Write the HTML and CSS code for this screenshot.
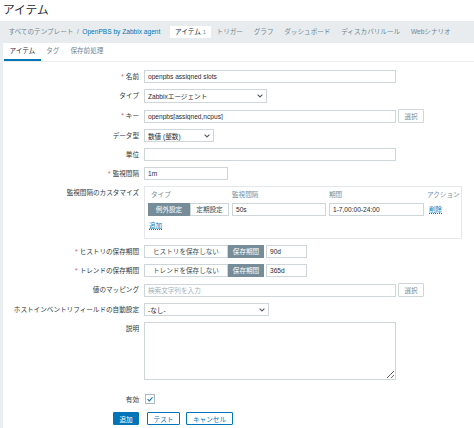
FILE: index.html
```html
<!DOCTYPE html>
<html lang="ja">
<head>
<meta charset="utf-8">
<title>アイテム</title>
<link rel="stylesheet" href="styles.css">
</head>
<body>
<header class="page-title">
  <h1>アイテム</h1>
</header>

<nav class="object-nav">
  <ul>
    <li class="crumbs"><a class="nav-link">すべてのテンプレート</a><span class="sep">/</span><a class="host-link">OpenPBS by Zabbix agent</a></li>
    <li class="selected">アイテム <span class="count">1</span></li>
    <li><a class="nav-link">トリガー</a></li>
    <li><a class="nav-link">グラフ</a></li>
    <li><a class="nav-link">ダッシュボード</a></li>
    <li><a class="nav-link">ディスカバリルール</a></li>
    <li><a class="nav-link">Webシナリオ</a></li>
  </ul>
</nav>

<main class="content">
  <div class="panel">
    <ul class="tabs">
      <li class="active">アイテム</li>
      <li>タグ</li>
      <li>保存前処理</li>
    </ul>

    <form class="form">
      <div class="row">
        <label class="label req">名前</label>
        <input class="input w-wide" value="openpbs assigned slots">
      </div>

      <div class="row">
        <label class="label">タイプ</label>
        <div class="select w-type"><span>Zabbixエージェント</span><svg class="chev" viewBox="0 0 6 4"><polyline points="0.6,0.6 3,3 5.4,0.6"/></svg></div>
      </div>

      <div class="row">
        <label class="label req">キー</label>
        <div class="field-group">
          <input class="input w-wide" value="openpbs[assigned,ncpus]">
          <button type="button" class="btn-alt">選択</button>
        </div>
      </div>

      <div class="row">
        <label class="label">データ型</label>
        <div class="select w-dtype"><span>数値 (整数)</span><svg class="chev" viewBox="0 0 6 4"><polyline points="0.6,0.6 3,3 5.4,0.6"/></svg></div>
      </div>

      <div class="row">
        <label class="label">単位</label>
        <input class="input w-wide" value="">
      </div>

      <div class="row">
        <label class="label req">監視間隔</label>
        <input class="input w-interval" value="1m">
      </div>

      <div class="row">
        <label class="label">監視間隔のカスタマイズ</label>
        <div class="interval-box">
          <div class="iv-grid iv-head">
            <span class="iv-type-head">タイプ</span>
            <span>監視間隔</span>
            <span>期間</span>
            <span>アクション</span>
          </div>
          <div class="iv-grid">
            <div class="toggle">
              <span class="on t-flex">例外設定</span><span class="t-sched">定期設定</span>
            </div>
            <input class="input" value="50s">
            <input class="input" value="1-7,00:00-24:00">
            <span><a class="link-action">削除</a></span>
          </div>
          <div class="iv-add"><a class="link-action">追加</a></div>
        </div>
      </div>

      <div class="row">
        <label class="label req">ヒストリの保存期間</label>
        <div class="field-group">
          <div class="toggle">
            <span class="t-off">ヒストリを保存しない</span><span class="on t-keep">保存期間</span>
          </div>
          <input class="input w-period" value="90d">
        </div>
      </div>

      <div class="row">
        <label class="label req">トレンドの保存期間</label>
        <div class="field-group">
          <div class="toggle">
            <span class="t-off">トレンドを保存しない</span><span class="on t-keep">保存期間</span>
          </div>
          <input class="input w-period" value="365d">
        </div>
      </div>

      <div class="row">
        <label class="label">値のマッピング</label>
        <div class="field-group">
          <input class="input w-wide" placeholder="検索文字列を入力">
          <button type="button" class="btn-alt">選択</button>
        </div>
      </div>

      <div class="row">
        <label class="label">ホストインベントリフィールドの自動設定</label>
        <div class="select w-inv"><span>-なし-</span><svg class="chev" viewBox="0 0 6 4"><polyline points="0.6,0.6 3,3 5.4,0.6"/></svg></div>
      </div>

      <div class="row row-desc">
        <label class="label">説明</label>
        <textarea class="textarea"></textarea>
      </div>

      <div class="row">
        <label class="label">有効</label>
        <span class="checkbox"><svg viewBox="0 0 10 10"><polyline points="2,5.2 4.2,7.4 8.2,2.8"/></svg></span>
      </div>

      <div class="row row-buttons">
        <div class="primary-cell"><button type="button" class="btn-primary">追加</button></div>
        <div class="secondary-cell">
          <button type="button" class="btn-outline b-test">テスト</button>
          <button type="button" class="btn-outline b-cancel">キャンセル</button>
        </div>
      </div>
    </form>
  </div>
</main>
</body>
</html>
```

FILE: styles.css
```css
* {
  box-sizing: border-box;
}

html,
body {
  margin: 0;
  padding: 0;
}

body {
  width: 474px;
  height: 428px;
  overflow: hidden;
  background: #ffffff;
  font-family: "Liberation Sans", "Noto Sans CJK JP", sans-serif;
  font-size: 6.6px;
  color: #1f2c33;
}

/* Page title */
.page-title {
  height: 21px;
  padding-left: 3px;
}

.page-title h1 {
  margin: 0;
  font-size: 11.7px;
  font-weight: normal;
  line-height: 19px;
  color: #1f2c33;
}

/* Template navigation strip */
.object-nav {
  height: 22px;
  background: #e8ecee;
}

.object-nav ul {
  display: flex;
  align-items: center;
  height: 100%;
  margin: 0;
  padding: 0 0 0 3px;
  list-style: none;
}

.object-nav li {
  padding: 0 5.4px;
  line-height: 12px;
  white-space: nowrap;
}

.object-nav li.crumbs {
  margin-right: 4px;
}

.object-nav li.selected {
  background: #ffffff;
  color: #1f2c33;
}

.nav-link {
  color: #6f8795;
}

.host-link {
  color: #0275b8;
}

.sep {
  margin: 0 3.5px;
  color: #768d99;
}

.count {
  font-size: 5.6px;
  color: #768d99;
}

/* Content */
.content {
  padding-left: 3px;
  background: #ebeef0;
}

.panel {
  height: 385px;
  background: #ffffff;
}

.tabs {
  display: flex;
  height: 19px;
  margin: 0;
  padding: 0 0 0 1px;
  list-style: none;
  border-bottom: 1px solid #ebeef0;
}

.tabs li {
  padding: 0 5.5px;
  line-height: 16px;
  color: #6f8795;
}

.tabs li.active {
  color: #1f2c33;
  border-bottom: 2px solid #0275b8;
}

/* Form grid */
.form {
  padding-top: 8px;
}

.row {
  display: grid;
  grid-template-columns: 136px auto;
  column-gap: 5px;
  align-items: start;
  margin-bottom: 6px;
}

.label {
  text-align: right;
  line-height: 13px;
  white-space: nowrap;
  color: #2a3a42;
}

.req::before {
  content: "*";
  margin-right: 2px;
  color: #e45959;
}

.input {
  display: block;
  height: 13px;
  margin: 0;
  padding: 0 3px;
  border: 1px solid #cfd6da;
  background: #ffffff;
  font: inherit;
  color: #1f2c33;
  outline: none;
}

.input::placeholder {
  color: #a3b1b8;
}

.w-wide {
  width: 252px;
}

.w-interval {
  width: 84px;
}

.w-period {
  width: 41px;
}

.select {
  display: flex;
  align-items: center;
  justify-content: space-between;
  height: 14px;
  padding: 0 3px;
  border: 1px solid #cfd6da;
  background: #ffffff;
}

.w-type {
  width: 123px;
}

.w-inv {
  width: 125px;
  height: 13px;
}

.w-dtype {
  width: 70px;
  height: 13px;
}

.chev {
  width: 6px;
  height: 4px;
  fill: none;
  stroke: #4f5f67;
  stroke-width: 1.1;
}

.field-group {
  display: flex;
  align-items: center;
  gap: 2px;
}

.btn-alt {
  width: 26px;
  height: 14px;
  margin: 0;
  padding: 0;
  border: 1px solid #cfd6da;
  border-radius: 1px;
  background: #ffffff;
  font: inherit;
  color: #768d99;
}

/* Custom intervals */
.interval-box {
  width: 318px;
  padding: 2px 0 6px 3px;
  border: 1px solid #e4e8ea;
}

.iv-grid {
  display: grid;
  grid-template-columns: 81px 94px 95px auto;
  column-gap: 3px;
  align-items: center;
  white-space: nowrap;
}

.iv-head {
  height: 11px;
  margin-bottom: 3px;
  color: #768d99;
  line-height: 11px;
}

.iv-type-head {
  padding-left: 3px;
}

.iv-grid .input {
  width: 100%;
}

.iv-grid .link-action {
  margin-left: 2px;
}

.iv-add {
  margin-top: 4px;
  line-height: 12px;
  padding-left: 1px;
}

.link-action {
  color: #0275b8;
  border-bottom: 1px dotted #0275b8;
  line-height: 9px;
}

.toggle {
  display: flex;
}

.toggle span {
  height: 13px;
  line-height: 11px;
  text-align: center;
  border: 1px solid #cfd6da;
  background: #ffffff;
  color: #3d4c54;
  white-space: nowrap;
}

.toggle span.on {
  background: #768d99;
  border-color: #768d99;
  color: #ffffff;
}

.t-flex {
  width: 42px;
}

.t-sched {
  width: 39px;
}

.t-off {
  width: 84px;
}

.t-keep {
  width: 36px;
}

.row-desc {
  margin-bottom: 13px;
}

.textarea {
  display: block;
  width: 252px;
  height: 58px;
  margin: 0;
  padding: 2px 3px;
  border: 1px solid #cfd6da;
  font: inherit;
  resize: vertical;
  outline: none;
}

.checkbox {
  display: block;
  width: 10px;
  height: 10px;
  margin: 1px 0 0 1px;
  border: 1px solid #acbbc2;
  background: #ffffff;
}

.checkbox svg {
  display: block;
  width: 8px;
  height: 8px;
  fill: none;
  stroke: #0275b8;
  stroke-width: 1.3;
}

/* Action buttons */
.primary-cell {
  display: flex;
  justify-content: flex-end;
}

.secondary-cell {
  display: flex;
  gap: 6px;
  padding-left: 3px;
}

.btn-primary,
.btn-outline {
  height: 13px;
  margin: 0;
  padding: 0;
  border: 1px solid #0275b8;
  border-radius: 1px;
  font: inherit;
}

.btn-primary {
  width: 26px;
  background: #0275b8;
  color: #ffffff;
}

.btn-outline {
  background: #ffffff;
  color: #0275b8;
}

.b-test {
  width: 33px;
}

.b-cancel {
  width: 47px;
}
```
